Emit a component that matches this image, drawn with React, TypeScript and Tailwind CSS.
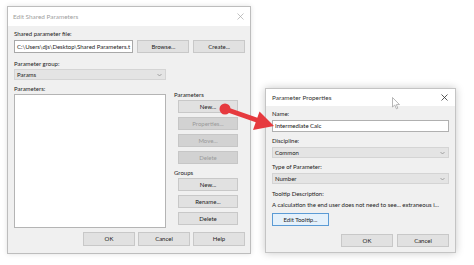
import React from "react";

const font = { fontFamily: 'Lato, "Noto Sans", Arial, sans-serif' };

function Btn({ children, w = "w-[52px]", h = "h-[13px]", disabled = false }: { children: React.ReactNode; w?: string; h?: string; disabled?: boolean }) {
  return (
    <div
      className={`${w} ${h} flex items-center justify-center border text-[6px] leading-none ${
        disabled ? "bg-[#d2d2d2] border-[#c6c6c6] text-[#9a9a9a]" : "bg-[#e1e1e1] border-[#c8c8c8] text-[#222]"
      }`}
    >
      {children}
    </div>
  );
}

function Select({ text, w }: { text: string; w: string }) {
  return (
    <div className={`${w} h-[11px] flex items-center justify-between bg-[#e4e4e4] border border-[#d4d4d4] pl-[2px] pr-[3px] text-[6px] leading-none text-[#222]`}>
      <span>{text}</span>
      <svg width="5" height="4" viewBox="0 0 5 4">
        <path d="M0.5 1 L2.5 3 L4.5 1" fill="none" stroke="#888" strokeWidth="0.7" />
      </svg>
    </div>
  );
}

function Label({ children, className = "" }: { children: React.ReactNode; className?: string }) {
  return <div className={`h-[10px] flex items-center text-[6px] leading-none text-[#222] ${className}`}>{children}</div>;
}

export default function App() {
  return (
    <div className="relative w-[474px] h-[265px] bg-white overflow-hidden flex items-start" style={font}>
      {/* Left dialog */}
      <div className="ml-[7px] mt-[6px] w-[244px] h-[248px] border border-[#bdbdbd] bg-[#f0f0f0] shadow-[0_0_5px_rgba(0,0,0,0.12)] flex flex-col">
        <div className="h-[19px] bg-white flex items-center justify-between pl-[5px] pr-[6px]">
          <span className="text-[6.4px] text-[#a0a0a0]">Edit Shared Parameters</span>
          <svg width="7" height="7" viewBox="0 0 7 7">
            <path d="M0.5 0.5 L6.5 6.5 M6.5 0.5 L0.5 6.5" stroke="#a8a8a8" strokeWidth="0.7" />
          </svg>
        </div>
        <div className="flex-1 flex flex-col pl-[6px] pr-[5px]">
          <Label className="mt-[3px]">Shared parameter file:</Label>
          <div className="mt-[1px] flex gap-[3px]">
            <div className="w-[120px] h-[13px] bg-white border border-[#a8a8a8] flex items-center pl-[2px] text-[6px] leading-none text-[#222] overflow-hidden whitespace-nowrap">
              C:\Users\djs\Desktop\Shared Parameters.t
            </div>
            <Btn w="w-[52px] ml-[1px]">Browse...</Btn>
            <Btn w="w-[52px] ml-[1px]">Create...</Btn>
          </div>
          <Label className="mt-[6px]">Parameter group:</Label>
          <div className="mt-[0px]">
            <Select text="Params" w="w-[152px]" />
          </div>
          <div className="flex mt-[4px]">
            <div className="flex flex-col">
              <Label>Parameters:</Label>
              <div className="w-[152px] h-[134px] bg-white border border-[#b4b4b4]" />
            </div>
            <div className="ml-[8px] flex flex-col">
              <Label className="mt-[6px]">Parameters</Label>
              <div className="ml-[4px] flex flex-col gap-[4px]">
                <Btn w="w-[60px]">New...</Btn>
                <Btn w="w-[60px]" disabled>Properties...</Btn>
                <Btn w="w-[60px]" disabled>Move...</Btn>
                <Btn w="w-[60px]" disabled>Delete</Btn>
              </div>
              <Label className="mt-[4px]">Groups</Label>
              <div className="ml-[4px] flex flex-col gap-[4px]">
                <Btn w="w-[60px]">New...</Btn>
                <Btn w="w-[60px]">Rename...</Btn>
                <Btn w="w-[60px]">Delete</Btn>
              </div>
            </div>
          </div>
          <div className="mt-[4px] flex justify-end gap-[3px]">
            <Btn w="w-[52px]" h="h-[14px]">OK</Btn>
            <Btn w="w-[52px]" h="h-[14px]">Cancel</Btn>
            <Btn w="w-[52px]" h="h-[14px]">Help</Btn>
          </div>
        </div>
      </div>

      {/* Right dialog */}
      <div className="ml-[14px] mt-[88px] w-[191px] h-[165px] border border-[#c4c4c4] bg-[#f0f0f0] shadow-[0_0_8px_rgba(0,0,0,0.22)] flex flex-col">
        <div className="h-[17px] bg-white flex items-center justify-between pl-[6px] pr-[7px]">
          <span className="text-[6.4px] text-[#333]">Parameter Properties</span>
          <svg width="7" height="7" viewBox="0 0 7 7">
            <path d="M0.5 0.5 L6.5 6.5 M6.5 0.5 L0.5 6.5" stroke="#333" strokeWidth="0.8" />
          </svg>
        </div>
        <div className="flex-1 flex flex-col pl-[6px] pr-[6px]">
          <Label className="mt-[3px]">Name:</Label>
          <div className="mt-[1px] h-[12px] bg-white border border-[#b0b0b0] flex items-center pl-[2px] text-[6px] leading-none text-[#111]">
            Intermediate Calc
          </div>
          <Label className="mt-[4px]">Discipline:</Label>
          <div className="mt-[1px]">
            <Select text="Common" w="w-full" />
          </div>
          <Label className="mt-[4px]">Type of Parameter:</Label>
          <div className="mt-[1px]">
            <Select text="Number" w="w-full" />
          </div>
          <Label className="mt-[5px]">Tooltip Description:</Label>
          <Label className="mt-[1px] whitespace-nowrap">A calculation the end user does not need to see... extraneous i...</Label>
          <div className="mt-[3px] w-[57px] h-[13px] flex items-center justify-center bg-[#e5f1fb] border border-[#5b9bd5] text-[6px] leading-none text-[#222]">
            Edit Tooltip...
          </div>
          <div className="mt-[8px] flex justify-end gap-[4px]">
            <Btn w="w-[52px]">OK</Btn>
            <Btn w="w-[52px]">Cancel</Btn>
          </div>
        </div>
      </div>

      {/* Red arrow overlay */}
      <svg className="absolute left-0 top-0 pointer-events-none" width="474" height="265" viewBox="0 0 474 265">
        <line x1="225" y1="109" x2="258" y2="120.5" stroke="#e63a3f" strokeWidth="5" strokeLinecap="round" />
        <circle cx="225" cy="109" r="5.5" fill="#e63a3f" />
        <polygon points="274,126 259.5,111.5 253,130" fill="#e63a3f" />
      </svg>

      {/* Mouse cursor */}
      <svg className="absolute left-[392px] top-[97px] pointer-events-none" width="9" height="13" viewBox="0 0 9 13">
        <path d="M0.5 0.5 L0.5 10 L2.8 8 L4.4 11.8 L5.8 11.2 L4.3 7.6 L7.5 7.6 Z" fill="#fff" stroke="#9a9a9a" strokeWidth="0.7" />
      </svg>
    </div>
  );
}
